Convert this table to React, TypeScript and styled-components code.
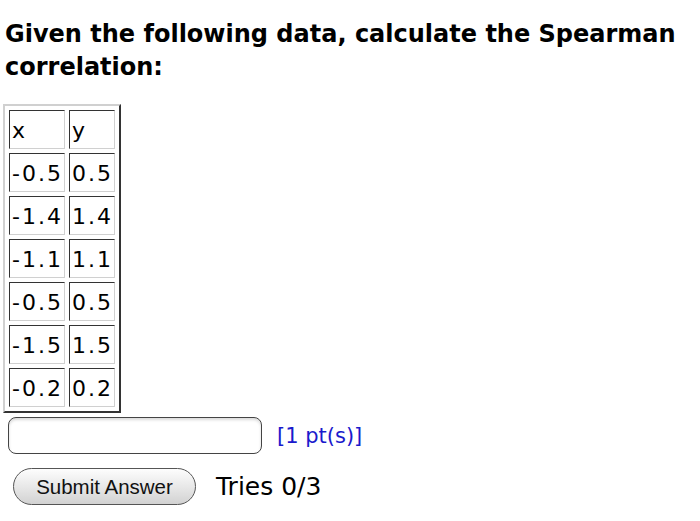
import React from "react";
import styled, {createGlobalStyle} from "styled-components";

const GlobalStyle = createGlobalStyle`
  body {
    margin: 0;
    padding: 0 3px;
    background: #fff;
    color: #000;
    font-family: "DejaVu Sans", Verdana, sans-serif;
  }
`;

const Question = styled.h3`
  font-size: 24px;
  font-weight: bold;
  line-height: 33px;
  margin: 18px 0 20px 2px;
`;

const DataTable = styled.table`
  border: 2px solid;
  border-color: #d0d0d0 #333 #333 #d0d0d0;
  border-spacing: 4px;
  font-size: 22px;
  letter-spacing: 2px;
  margin-bottom: 4px;
`;

const Cell = styled.td`
  border: 1px solid;
  border-color: #333 #d0d0d0 #d0d0d0 #333;
  padding: 6px 1px 5px 2px;
  height: 26px;
`;

const AnswerRow = styled.div`
  display: flex;
  align-items: center;
  gap: 15px;
  padding-left: 5px;
`;

const AnswerInput = styled.input`
  width: 254px;
  height: 37px;
  box-sizing: border-box;
  border: 1.5px solid #444;
  border-radius: 8px;
  box-shadow: inset 0 2px 3px rgba(0, 0, 0, 0.15);
  outline: none;
`;

const Points = styled.span`
  color: #1a1acc;
  font-size: 21px;
`;

const SubmitRow = styled.div`
  display: flex;
  align-items: center;
  gap: 20px;
  padding-left: 10px;
  margin-top: 14px;
`;

const SubmitButton = styled.button`
  font-family: "Liberation Sans", Arial, sans-serif;
  font-size: 20.5px;
  color: #111;
  width: 183px;
  height: 37px;
  border: 1.5px solid #555;
  border-radius: 19px;
  background: linear-gradient(#fdfdfd, #e6e6e6 55%, #d2d2d2);
`;

const Tries = styled.span`
  font-size: 25px;
`;

const rows: [string, string][] = [
  ["-0.5", "0.5"],
  ["-1.4", "1.4"],
  ["-1.1", "1.1"],
  ["-0.5", "0.5"],
  ["-1.5", "1.5"],
  ["-0.2", "0.2"],
];

export default function App() {
  return (
    <>
      <GlobalStyle/>
      <Question>Given the following data, calculate the Spearman correlation:</Question>
      <DataTable>
        <tbody>
        <tr><Cell>x</Cell><Cell>y</Cell></tr>
        {rows.map(([x, y], i) => (
          <tr key={i}><Cell>{x}</Cell><Cell>{y}</Cell></tr>
        ))}
        </tbody>
      </DataTable>
      <AnswerRow>
        <AnswerInput type="text"/>
        <Points>[1 pt(s)]</Points>
      </AnswerRow>
      <SubmitRow>
        <SubmitButton>Submit Answer</SubmitButton>
        <Tries>Tries 0/3</Tries>
      </SubmitRow>
    </>
  );
}
